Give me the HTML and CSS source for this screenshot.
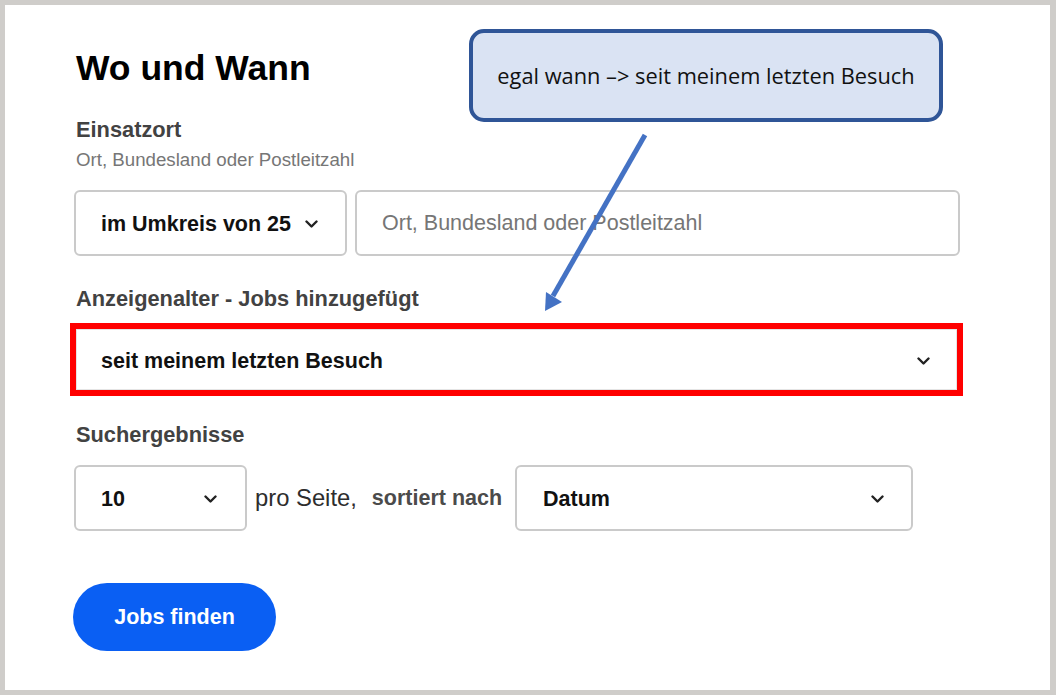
FILE: index.html
```html
<!DOCTYPE html>
<html lang="de">
<head>
    <meta charset="UTF-8">
    <meta name="viewport" content="width=device-width, initial-scale=1.0">
    <title>Wo und Wann</title>
    <link rel="stylesheet" href="styles.css">
</head>
<body>
    <div class="frame">
        <form class="search">
            <h1 class="title">Wo und Wann</h1>

            <!-- Einsatzort -->
            <div class="label label-where">Einsatzort</div>
            <div class="hint">Ort, Bundesland oder Postleitzahl</div>
            <div class="row row-where">
                <div class="select select-radius">
                    <span>im Umkreis von 25</span>
                    <svg class="chev" width="13" height="8" viewBox="0 0 13 8"><polyline points="1.5,1.5 6.5,6.5 11.5,1.5"/></svg>
                </div>
                <input class="field" type="text" placeholder="Ort, Bundesland oder Postleitzahl">
            </div>

            <!-- Anzeigenalter -->
            <div class="label label-age">Anzeigenalter - Jobs hinzugefügt</div>
            <div class="highlight">
                <div class="select select-age">
                    <span>seit meinem letzten Besuch</span>
                    <svg class="chev" width="13" height="8" viewBox="0 0 13 8"><polyline points="1.5,1.5 6.5,6.5 11.5,1.5"/></svg>
                </div>
            </div>

            <!-- Suchergebnisse -->
            <div class="label label-results">Suchergebnisse</div>
            <div class="row row-results">
                <div class="select select-count">
                    <span>10</span>
                    <svg class="chev" width="13" height="8" viewBox="0 0 13 8"><polyline points="1.5,1.5 6.5,6.5 11.5,1.5"/></svg>
                </div>
                <span class="per-page">pro Seite,</span>
                <span class="sort-by">sortiert nach</span>
                <div class="select select-sort">
                    <span>Datum</span>
                    <svg class="chev" width="13" height="8" viewBox="0 0 13 8"><polyline points="1.5,1.5 6.5,6.5 11.5,1.5"/></svg>
                </div>
            </div>

            <button class="submit" type="button">Jobs finden</button>
        </form>

        <!-- annotation -->
        <div class="callout">egal wann –&gt; seit meinem letzten Besuch</div>
        <svg class="pointer" width="1056" height="695" viewBox="0 0 1056 695">
            <line x1="645" y1="135" x2="553" y2="296"/>
            <polygon points="545,311 546,292 562,302"/>
        </svg>
    </div>
</body>
</html>
```

FILE: styles.css
```css
* {
    box-sizing: border-box;
}

body {
    margin: 0;
    background-color: #fff;
    font-family: "Liberation Sans", Arial, sans-serif;
    color: #2d2d2d;
}

.frame {
    position: relative;
    width: 1056px;
    height: 695px;
    border: 5px solid #cfcdca;
    border-right-width: 6px;
    background-color: #fff;
    overflow: hidden;
}

.search {
    display: flex;
    flex-direction: column;
    align-items: flex-start;
    width: 955px;
    padding: 42px 0 0 69px;
}

.title {
    margin: 0 0 0 2px;
    font-size: 35.5px;
    line-height: 42px;
    font-weight: bold;
    color: #000;
}

.label {
    margin-left: 2px;
    font-size: 21.8px;
    line-height: 26px;
    font-weight: bold;
    color: #424242;
}

.label-where {
    margin-top: 28px;
}

.hint {
    margin: 6px 0 0 2px;
    font-size: 18.7px;
    line-height: 22px;
    color: #767676;
}

.row {
    display: flex;
    align-items: center;
    width: 100%;
}

.row-where {
    margin-top: 19px;
    gap: 8px;
}

.select {
    display: flex;
    align-items: center;
    justify-content: space-between;
    height: 66px;
    padding-top: 2px;
    border: 2px solid #cacaca;
    border-radius: 6px;
    background-color: #fff;
    font-size: 21.5px;
    font-weight: bold;
    color: #111;
}

.chev {
    flex-shrink: 0;
    fill: none;
    stroke: #222;
    stroke-width: 2.4;
    stroke-linecap: round;
    stroke-linejoin: round;
}

.select-radius {
    width: 273px;
    padding-left: 25px;
    padding-right: 27px;
}

.field {
    flex: 1;
    height: 66px;
    padding: 0 0 0 25px;
    border: 2px solid #cacaca;
    border-radius: 6px;
    font-family: "Liberation Sans", Arial, sans-serif;
    font-size: 21.5px;
    color: #2d2d2d;
    outline: none;
}

.field::placeholder {
    color: #767676;
}

.label-age {
    margin-top: 30px;
}

.highlight {
    width: 893px;
    margin: 11px 0 0 -4px;
    border: 6px solid #ff0000;
}

.select-age {
    height: 61px;
    padding: 3px 26px 0 24px;
    border: 1px solid #e4e4e4;
    border-radius: 0;
}

.label-results {
    margin-top: 26px;
}

.row-results {
    margin-top: 17px;
}

.select-count {
    width: 173px;
    padding-left: 25px;
    padding-right: 28px;
}

.per-page {
    margin-left: 8px;
    font-size: 23.8px;
    color: #2d2d2d;
}

.sort-by {
    margin-left: 15px;
    font-size: 21.5px;
    font-weight: bold;
    color: #4b4b4b;
}

.select-sort {
    width: 398px;
    margin-left: 13px;
    padding-left: 26px;
    padding-right: 27px;
}

.submit {
    width: 203px;
    height: 68px;
    margin: 52px 0 0 -1px;
    border: none;
    border-radius: 34px;
    background-color: #0a5ff3;
    color: #fff;
    font-family: "Liberation Sans", Arial, sans-serif;
    font-size: 21.5px;
    font-weight: bold;
    cursor: pointer;
}

.callout {
    position: absolute;
    left: 464px;
    top: 24px;
    width: 474px;
    height: 93px;
    display: flex;
    align-items: center;
    justify-content: center;
    border: 4.5px solid #2f5597;
    border-radius: 15px;
    background-color: #dae3f3;
    font-family: "Open Sans", sans-serif;
    font-size: 21.8px;
    color: #111;
}

.pointer {
    position: absolute;
    left: -5px;
    top: -5px;
    pointer-events: none;
}

.pointer line {
    stroke: #4472c4;
    stroke-width: 5;
}

.pointer polygon {
    fill: #4472c4;
}
```
